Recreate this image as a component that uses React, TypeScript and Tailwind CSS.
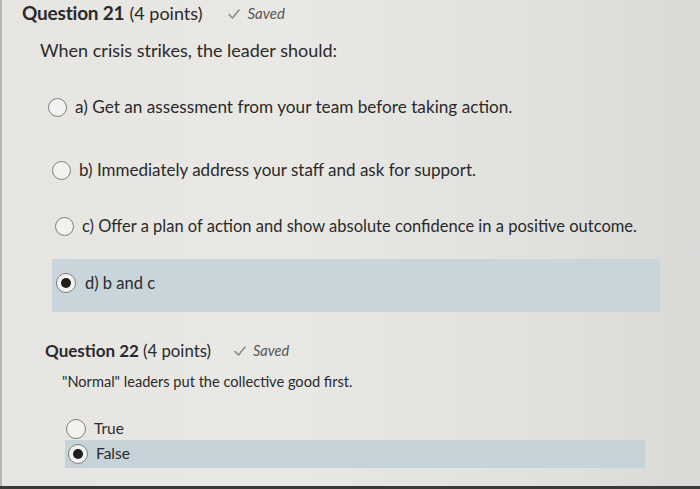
import React from "react";

function Radio({ checked, size = 19 }: { checked?: boolean; size?: number }) {
  return (
    <span
      className="inline-flex shrink-0 items-center justify-center rounded-full border-[1.5px] border-[#7d7d7d] bg-[#f2f2f0]"
      style={{ width: size, height: size }}
    >
      {checked && <span className="block h-[10px] w-[10px] rounded-full bg-[#1e1e1e]" />}
    </span>
  );
}

function Check() {
  return (
    <svg width="14" height="12" viewBox="0 0 14 12" className="shrink-0">
      <path d="M2 6.5 L5.5 10 L12 2" fill="none" stroke="#8a8a8a" strokeWidth="1.6" strokeLinecap="round" strokeLinejoin="round" />
    </svg>
  );
}

export default function App() {
  return (
    <div
      className="relative h-[489px] w-[700px] overflow-hidden text-[#2a2a2a]"
      style={{ fontFamily: "Lato, 'Open Sans', sans-serif", background: "linear-gradient(90deg,#e6e5e1 0%,#e9e8e5 40%,#e0e0dd 80%,#d9d9d7 100%)" }}
    >
      <div className="h-full border-l-[2px] border-[#b5b5b2]">
        {/* Question 21 header */}
        <div className="flex h-[26px] items-center pl-[20px] pt-[1px]">
          <span className="text-[19px] font-bold tracking-[-0.2px]">Question 21</span>
          <span className="ml-[5px] text-[18px]">(4 points)</span>
          <span className="ml-[25px] flex items-center gap-[6px] text-[#555]">
            <Check />
            <span className="text-[15px] italic">Saved</span>
          </span>
        </div>
        <div className="mt-[12px] pl-[38px] text-[18px] leading-[24px]">When crisis strikes, the leader should:</div>

        {/* options */}
        <div className="mt-[35px] flex h-[20px] items-center gap-[8px] pl-[46px] text-[17.2px]">
          <Radio />
          <span>a) Get an assessment from your team before taking action.</span>
        </div>
        <div className="mt-[43px] flex h-[20px] items-center gap-[8px] pl-[50px] text-[17px]">
          <Radio />
          <span>b) Immediately address your staff and ask for support.</span>
        </div>
        <div className="mt-[36px] flex h-[20px] items-center gap-[8px] pl-[53px] text-[16.5px]">
          <Radio />
          <span>c) Offer a plan of action and show absolute confidence in a positive outcome.</span>
        </div>
        <div className="ml-[50px] mt-[23px] flex h-[53px] w-[608px] items-start gap-[9px] bg-[#c9d5db] pl-[4px] pt-[14px] text-[16.5px]">
          <Radio checked size={20} />
          <span className="leading-[20px]">d) b and c</span>
        </div>

        {/* Question 22 */}
        <div className="mt-[29px] flex h-[20px] items-center pl-[43px]">
          <span className="text-[17px] font-bold">Question 22</span>
          <span className="ml-[4px] text-[16.8px]">(4 points)</span>
          <span className="ml-[22px] flex items-center gap-[6px] text-[#555]">
            <Check />
            <span className="text-[14.5px] italic">Saved</span>
          </span>
        </div>
        <div className="mt-[11px] pl-[60px] text-[14.6px] leading-[20px]">"Normal" leaders put the collective good first.</div>

        <div className="mt-[27px] flex h-[20px] items-center gap-[8px] pl-[64px] text-[15.5px]">
          <Radio size={20} />
          <span>True</span>
        </div>
        <div className="ml-[63px] mt-[1px] flex h-[28px] w-[580px] items-center gap-[8px] bg-[#c6d3d9] pl-[3px] text-[15.5px]">
          <Radio checked size={20} />
          <span>False</span>
        </div>
      </div>
      <div className="absolute bottom-0 left-0 h-[3px] w-full bg-[#3a3a3a]" />
    </div>
  );
}
